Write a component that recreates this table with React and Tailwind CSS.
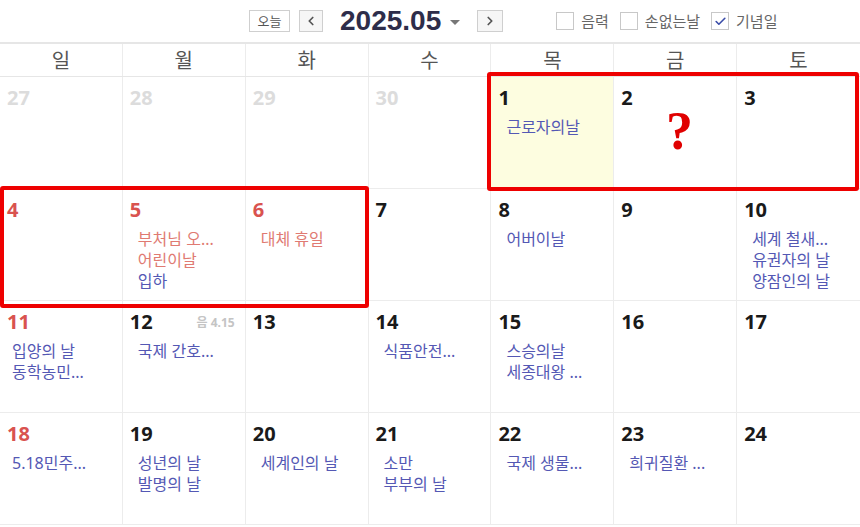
import { Check, ChevronLeft, ChevronRight } from 'lucide-react';

const days = ['일', '월', '화', '수', '목', '금', '토'];

// kind: 'prev' faded, 'red' sunday/holiday, default black
const weeks = [
  [
    { d: 27, kind: 'prev' }, { d: 28, kind: 'prev' }, { d: 29, kind: 'prev' }, { d: 30, kind: 'prev' },
    { d: 1, today: true, ev: [['근로자의날']] },
    { d: 2 }, { d: 3 },
  ],
  [
    { d: 4, kind: 'red' },
    { d: 5, kind: 'red', ev: [['부처님 오...', 'h'], ['어린이날', 'h'], ['입하']] },
    { d: 6, kind: 'red', ev: [['대체 휴일', 'h']] },
    { d: 7 },
    { d: 8, ev: [['어버이날']] },
    { d: 9 },
    { d: 10, ev: [['세계 철새...'], ['유권자의 날'], ['양잠인의 날']] },
  ],
  [
    { d: 11, kind: 'red', ev: [['입양의 날'], ['동학농민...']] },
    { d: 12, lunar: '음 4.15', ev: [['국제 간호...']] },
    { d: 13 },
    { d: 14, ev: [['식품안전...']] },
    { d: 15, ev: [['스승의날'], ['세종대왕 ...']] },
    { d: 16 }, { d: 17 },
  ],
  [
    { d: 18, kind: 'red', ev: [['5.18민주...']] },
    { d: 19, ev: [['성년의 날'], ['발명의 날']] },
    { d: 20, ev: [['세계인의 날']] },
    { d: 21, ev: [['소만'], ['부부의 날']] },
    { d: 22, ev: [['국제 생물...']] },
    { d: 23, ev: [['희귀질환 ...']] },
    { d: 24 },
  ],
];

const numColor = { prev: 'text-[#dcdcdc]', red: 'text-[#d9534f]' };

function Box({ checked, label }) {
  return (
    <label className="flex items-center gap-[7px] text-[15px] text-[#666]">
      <span className="flex h-[18px] w-[18px] items-center justify-center border border-[#c8c8c8] bg-white">
        {checked && <Check size={13} strokeWidth={3} className="text-[#3a4ca8]" />}
      </span>
      {label}
    </label>
  );
}

function Cell({ c, col }) {
  return (
    <div className={`relative border-r border-b border-[#ececec] px-[7px] pt-[9px] last:border-r-0 ${c.today ? 'bg-[#fdfde0]' : 'bg-white'}`}>
      <div className="flex items-start justify-between">
        <span className={`text-[20px] font-bold leading-[24px] ${numColor[c.kind] || 'text-[#1a1a1a]'}`}>{c.d}</span>
        {c.lunar && <span className="mr-[3px] mt-[4px] text-[12px] font-bold text-[#c4c4c4]">{c.lunar}</span>}
      </div>
      <div className={`mt-[7px] ${col === 0 ? 'pl-[5px]' : 'pl-[8px]'}`}>
        {(c.ev || []).map(([t, h]) => (
          <div key={t} className={`text-[16px] leading-[21px] ${h ? 'text-[#e07a72]' : 'text-[#5458b4]'}`}>{t}</div>
        ))}
      </div>
    </div>
  );
}

export default function App() {
  return (
    <div className="relative h-[527px] w-[860px] overflow-hidden bg-white" style={{ fontFamily: '"Noto Sans", "Noto Sans CJK KR", sans-serif' }}>
      <div className="flex h-[44px] items-center border-b-2 border-[#e6e6e6] pl-[249px]">
        <button className="h-[22px] w-[41px] border border-[#cfcfcf] bg-white text-[13px] leading-none text-[#555]">오늘</button>
        <button className="ml-[9px] flex h-[22px] w-[24px] items-center justify-center border border-[#cfcfcf] bg-[#f6f6f6] text-[#555]">
          <ChevronLeft size={14} strokeWidth={3} />
        </button>
        <span className="ml-[17px] text-[28px] font-bold leading-none text-[#2e2d4a]" style={{ fontFamily: '"Liberation Sans", Arial, sans-serif' }}>2025.05</span>
        <span className="ml-[9px] mt-[2px] h-0 w-0 border-x-[5px] border-t-[5px] border-x-transparent border-t-[#777]" />
        <button className="ml-[17px] flex h-[22px] w-[26px] items-center justify-center border border-[#cfcfcf] bg-[#f6f6f6] text-[#555]">
          <ChevronRight size={14} strokeWidth={3} />
        </button>
        <div className="ml-[53px] flex items-center gap-[11px]">
          <Box label="음력" />
          <Box label="손없는날" />
          <Box checked label="기념일" />
        </div>
      </div>

      <div className="grid h-[33px] grid-cols-7 border-b border-[#e6e6e6]">
        {days.map((d) => (
          <div key={d} className="flex items-center justify-center border-r border-[#ececec] pt-[2px] text-[20px] text-[#555] last:border-r-0">{d}</div>
        ))}
      </div>

      {weeks.map((w, i) => (
        <div key={i} className="grid h-[112px] grid-cols-7">
          {w.map((c, j) => <Cell key={j} c={c} col={j} />)}
        </div>
      ))}

      {/* annotation overlays */}
      <div className="absolute left-[487px] top-[72px] h-[119px] w-[372px] rounded-[3px] border-4 border-[#ee0000]" />
      <div className="absolute left-0 top-[186px] h-[122px] w-[369px] rounded-[3px] border-4 border-[#ee0000]" />
      <span className="absolute left-[666px] top-[104px] text-[54px] font-bold leading-none text-[#e00000]" style={{ fontFamily: '"Liberation Serif", serif' }}>?</span>
    </div>
  );
}
